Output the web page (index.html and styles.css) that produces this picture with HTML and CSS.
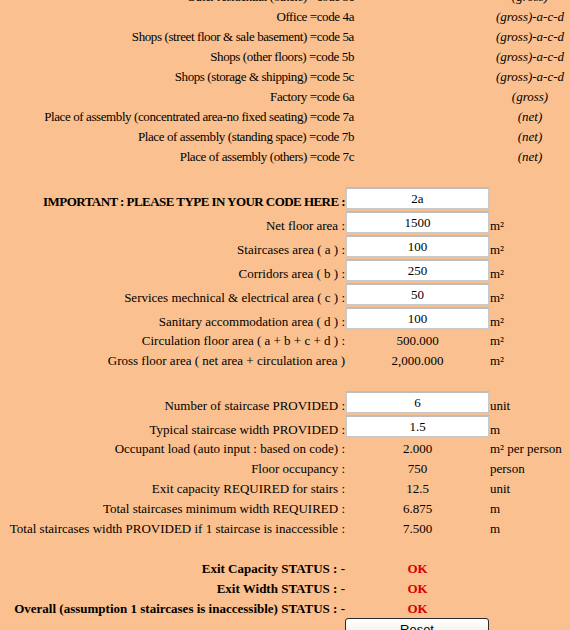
FILE: index.html
```html
<!DOCTYPE html>
<html lang="en">
<head>
    <meta charset="UTF-8">
    <title>Staircase Exit Capacity</title>
    <link rel="stylesheet" href="styles.css">
</head>
<body>

<div class="sheet">
    <div class="codes">
        <div class="code-row"><span class="code-name">Other residential (others) =code 3c</span><span></span><span class="code-type">(gross)</span></div>
        <div class="code-row"><span class="code-name">Office =code 4a</span><span></span><span class="code-type">(gross)-a-c-d</span></div>
        <div class="code-row"><span class="code-name">Shops (street floor &amp; sale basement) =code 5a</span><span></span><span class="code-type">(gross)-a-c-d</span></div>
        <div class="code-row"><span class="code-name">Shops (other floors) =code 5b</span><span></span><span class="code-type">(gross)-a-c-d</span></div>
        <div class="code-row"><span class="code-name">Shops (storage &amp; shipping) =code 5c</span><span></span><span class="code-type">(gross)-a-c-d</span></div>
        <div class="code-row"><span class="code-name">Factory =code 6a</span><span></span><span class="code-type">(gross)</span></div>
        <div class="code-row"><span class="code-name">Place of assembly (concentrated area-no fixed seating) =code 7a</span><span></span><span class="code-type">(net)</span></div>
        <div class="code-row"><span class="code-name">Place of assembly (standing space) =code 7b</span><span></span><span class="code-type">(net)</span></div>
        <div class="code-row"><span class="code-name">Place of assembly (others) =code 7c</span><span></span><span class="code-type">(net)</span></div>
    </div>

    <form class="calc" id="calc">
        <div class="row input-row gap-above">
            <label class="label bold tight">IMPORTANT : PLEASE TYPE IN YOUR CODE HERE :</label>
            <input class="box" type="text" value="2a">
            <span class="unit"></span>
        </div>
        <div class="row input-row">
            <label class="label">Net floor area :</label>
            <input class="box" type="text" value="1500">
            <span class="unit">m&sup2;</span>
        </div>
        <div class="row input-row">
            <label class="label">Staircases area ( a ) :</label>
            <input class="box" type="text" value="100">
            <span class="unit">m&sup2;</span>
        </div>
        <div class="row input-row">
            <label class="label">Corridors area ( b ) :</label>
            <input class="box" type="text" value="250">
            <span class="unit">m&sup2;</span>
        </div>
        <div class="row input-row">
            <label class="label">Services mechnical &amp; electrical area ( c ) :</label>
            <input class="box" type="text" value="50">
            <span class="unit">m&sup2;</span>
        </div>
        <div class="row input-row">
            <label class="label">Sanitary accommodation area ( d ) :</label>
            <input class="box" type="text" value="100">
            <span class="unit">m&sup2;</span>
        </div>
        <div class="row">
            <span class="label">Circulation floor area ( a + b + c + d ) :</span>
            <span class="value">500.000</span>
            <span class="unit">m&sup2;</span>
        </div>
        <div class="row">
            <span class="label">Gross floor area ( net area + circulation area )</span>
            <span class="value">2,000.000</span>
            <span class="unit">m&sup2;</span>
        </div>

        <div class="row input-row gap-above">
            <label class="label">Number of staircase PROVIDED :</label>
            <input class="box" type="text" value="6">
            <span class="unit">unit</span>
        </div>
        <div class="row input-row">
            <label class="label">Typical staircase width PROVIDED :</label>
            <input class="box" type="text" value="1.5">
            <span class="unit">m</span>
        </div>
        <div class="row">
            <span class="label">Occupant load (auto input : based on code) :</span>
            <span class="value">2.000</span>
            <span class="unit">m&sup2; per person</span>
        </div>
        <div class="row">
            <span class="label">Floor occupancy :</span>
            <span class="value">750</span>
            <span class="unit">person</span>
        </div>
        <div class="row">
            <span class="label">Exit capacity REQUIRED for stairs :</span>
            <span class="value">12.5</span>
            <span class="unit">unit</span>
        </div>
        <div class="row">
            <span class="label">Total staircases minimum width REQUIRED :</span>
            <span class="value">6.875</span>
            <span class="unit">m</span>
        </div>
        <div class="row">
            <span class="label">Total staircases width PROVIDED if 1 staircase is inaccessible :</span>
            <span class="value">7.500</span>
            <span class="unit">m</span>
        </div>

        <div class="row gap-above">
            <span class="label bold">Exit Capacity STATUS : -</span>
            <span class="value status">OK</span>
            <span class="unit"></span>
        </div>
        <div class="row">
            <span class="label bold">Exit Width STATUS : -</span>
            <span class="value status">OK</span>
            <span class="unit"></span>
        </div>
        <div class="row">
            <span class="label bold">Overall (assumption 1 staircases is inaccessible) STATUS : -</span>
            <span class="value status">OK</span>
            <span class="unit"></span>
        </div>
        <div class="row button-row">
            <span></span>
            <button type="reset" class="reset">Reset</button>
            <span></span>
        </div>
    </form>
</div>

</body>
</html>
```

FILE: styles.css
```css
body {
    margin: 0;
    padding: 0;
    background-color: #fac08f; /* peach background */
    font-family: "Liberation Serif", "Times New Roman", serif;
    font-size: 13px;
    color: black;
}

.sheet {
    margin-top: -13px; /* page is scrolled a bit */
}

/* list of occupancy codes */
.code-row {
    display: grid;
    grid-template-columns: 354px 136px 80px;
    height: 20px;
    line-height: 20px;
}

.code-name {
    text-align: right;
    white-space: nowrap;
    letter-spacing: -0.4px;
}

.code-type {
    text-align: center;
    font-style: italic;
}

/* calculator */
.row {
    display: grid;
    grid-template-columns: 345px 145px 1fr;
    align-items: end;
    height: 20px;
    line-height: 18px;
}

.input-row {
    height: 24px;
}

.gap-above {
    margin-top: 20px;
}

.label {
    text-align: right;
    white-space: nowrap;
    padding-bottom: 1px;
}

.bold {
    font-weight: bold;
}

.tight {
    letter-spacing: -0.55px;
}

.value {
    text-align: center;
    padding-bottom: 1px;
}

.unit {
    white-space: nowrap;
    padding-bottom: 1px;
}

.box {
    box-sizing: border-box;
    width: 145px;
    height: 23px;
    margin: 0 0 2px 0;
    padding: 0;
    border: 2px solid #c9c9c9;
    border-top-color: #bdbdbd;
    background: white;
    font-family: "Liberation Serif", "Times New Roman", serif;
    font-size: 13px;
    text-align: center;
    color: black;
}

.status {
    color: #d80000;
    font-weight: bold;
}

.button-row {
    height: 30px;
    align-items: start;
}

.reset {
    width: 144px;
    height: 23px;
    margin-top: -1px;
    border: 1px solid #2b2b2b;
    border-radius: 3px;
    background: linear-gradient(#ffffff, #f3f3ee 60%, #dcdad0);
    font-family: "Liberation Sans", Arial, sans-serif;
    font-size: 13px;
    color: black;
    cursor: pointer;
}
```
